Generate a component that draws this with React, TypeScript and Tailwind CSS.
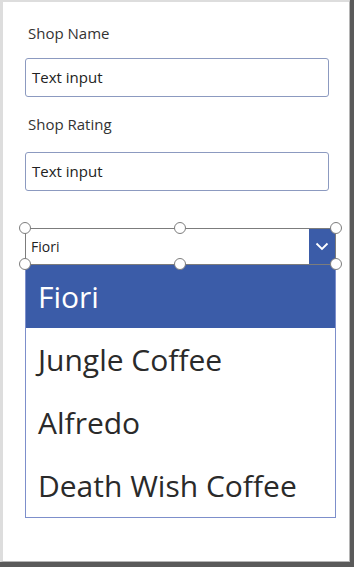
import React from "react";

function Handle({ className }: { className: string }) {
  return (
    <div
      className={`absolute w-[12px] h-[12px] rounded-full bg-white border border-[#7d7d7d] ${className}`}
    />
  );
}

export default function App() {
  const items = ["Fiori", "Jungle Coffee", "Alfredo", "Death Wish Coffee"];
  return (
    <div
      className="w-[354px] h-[567px] bg-[#5a5a5a] pr-[4px] pb-[5px] overflow-hidden"
      style={{ fontFamily: '"Open Sans", "Noto Sans", sans-serif' }}
    >
      <div className="w-full h-full bg-white border-l-[3px] border-t-[2px] border-r border-b border-l-[#dddddd] border-t-[#dddddd] border-r-[#b5b5b5] border-b-[#b5b5b5] pl-[22px] pr-[14px] pt-[21px] text-[#333]">
        <div className="text-[15px] leading-[20px] pl-[3px]">Shop Name</div>
        <div className="mt-[15px] w-[304px] h-[39px] border border-[#8c9ac0] rounded-[3px] flex items-center pl-[6px] text-[15px] text-[#222]">
          Text input
        </div>
        <div className="mt-[17px] text-[15px] leading-[20px] pl-[3px]">Shop Rating</div>
        <div className="mt-[18px] w-[304px] h-[39px] border border-[#8c9ac0] rounded-[3px] flex items-center pl-[6px] text-[15px] text-[#222]">
          Text input
        </div>
        <div className="relative mt-[37px] w-[311px]">
          <div className="h-[37px] border border-[#7c7c7c] flex items-stretch">
            <div className="flex-1 flex items-center pl-[5px] text-[14px] text-[#222]">Fiori</div>
            <div className="w-[26px] bg-[#3b5ca8] flex items-center justify-center">
              <svg width="14" height="9" viewBox="0 0 14 9" fill="none">
                <path d="M1.5 1.5 L7 7 L12.5 1.5" stroke="white" strokeWidth="1.8" />
              </svg>
            </div>
          </div>
          <Handle className="left-[-6px] top-[-6px]" />
          <Handle className="left-[149px] top-[-6px]" />
          <Handle className="right-[-6px] top-[-6px]" />
          <Handle className="left-[-6px] top-[30px]" />
          <Handle className="left-[149px] top-[30px]" />
          <Handle className="right-[-6px] top-[30px]" />
        </div>
        <div className="w-[311px] border border-[#7d8fcb] border-t-0 flex flex-col">
          {items.map((it, i) => (
            <div
              key={it}
              className={`h-[63px] flex items-center pl-[12px] text-[30px] ${
                i === 0 ? "bg-[#3b5ca8] text-white" : "text-[#2a2a2a]"
              }`}
            >
              {it}
            </div>
          ))}
        </div>
      </div>
    </div>
  );
}
